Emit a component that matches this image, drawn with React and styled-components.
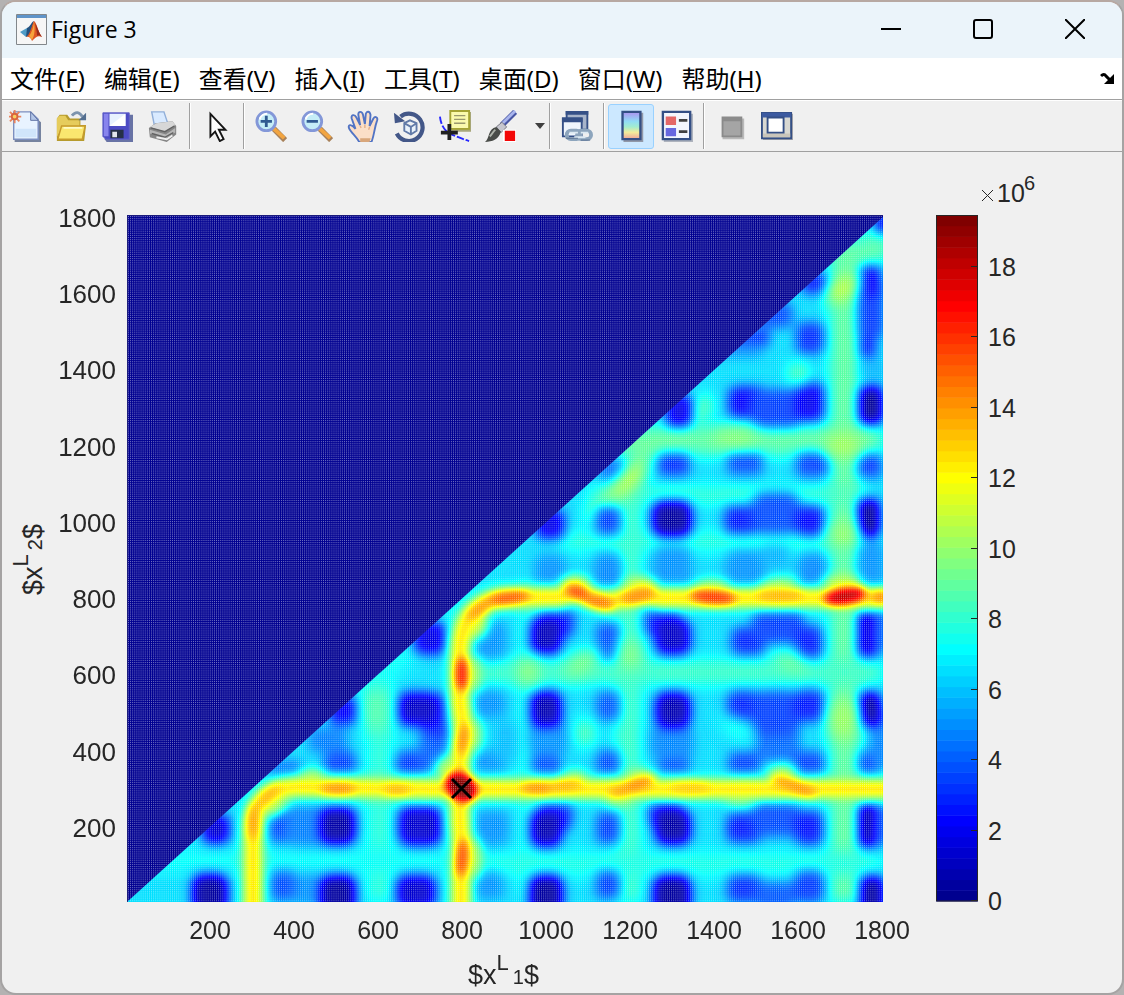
import * as React from 'react';
import styled, { createGlobalStyle } from 'styled-components';

const GlobalStyle = createGlobalStyle`
  * {
    box-sizing: border-box;
  }

  body {
    margin: 0;
    background: #b4b2b2;
    font-family: 'Open Sans', 'Noto Sans CJK SC', sans-serif;
    color: #000;
  }

  button {
    border: 0;
    padding: 0;
    background: none;
    font: inherit;
    color: inherit;
  }
`;

const Window = styled.main`
  min-height: 100vh;
  display: flex;
  flex-direction: column;
  overflow: hidden;
  border: 2px solid #a5a3a3;
  border-top-color: #b7a8a2;
  border-radius: 16px;
  background: #f0f0f0;
`;

const TitleBar = styled.header`
  height: 56px;
  display: flex;
  align-items: center;
  padding: 0 1px 2px 14px;
  background: #ebf4fa;

  & > h1 {
    flex-grow: 1;
    margin: 0 0 0 4px;
    font-size: 23px;
    line-height: 32px;
    font-weight: 400;
  }
`;

const WindowButton = styled.button`
  width: 92px;
  height: 54px;
  display: grid;
  place-items: center;
`;

const MenuBar = styled.nav`
  height: 42px;
  display: flex;
  align-items: center;
  gap: 19px;
  padding: 0 8px;
  border-bottom: 1px solid #a0a0a0;
  background: #fff;

  & > .spacer {
    flex-grow: 1;
  }
`;

const MenuButton = styled.button`
  font-family: 'Noto Sans', 'Noto Sans CJK SC', sans-serif;
  font-size: 24px;
  line-height: 36px;
  font-weight: 400;
  white-space: nowrap;

  & > u {
    text-decoration-thickness: 1px;
    text-underline-offset: 3px;
  }
`;

const ToolBar = styled.div`
  height: 52px;
  display: flex;
  align-items: center;
  border-top: 1px solid #fff;
  border-bottom: 1px solid #a0a0a0;
`;

const ToolButton = styled.button`
  width: ${(p) => (p.$narrow ? 22 : 46)}px;
  height: 45px;
  display: flex;
  align-items: center;
  justify-content: ${(p) => (p.$narrow ? 'flex-end' : 'center')};
  border: 1px solid ${(p) => (p.$active ? '#99d1ff' : 'transparent')};
  border-radius: 3px;
  background: ${(p) => (p.$active ? '#cce8ff' : 'none')};
`;

const Separator = styled.span`
  width: 2px;
  height: 46px;
  margin: 0 3px;
  border-left: 1px solid #a0a0a0;
  background: #fff;
`;

const Plot = styled.svg`
  display: block;
  width: 100%;
  height: auto;
  font-family: 'Liberation Sans', Arial, sans-serif;
  font-size: 25px;
  fill: #262626;
`;

const Icon = ({ size = 32, children }) => (
  <svg width={size} height={size} viewBox="0 0 34 34" fill="none" aria-hidden="true">
    {children}
  </svg>
);

const Lens = ({ plus }) => (
  <Icon>
    <path d="M20 20L32 32" stroke="#a8815a" strokeWidth="6" />
    <path d="M19 19L31 30" stroke="#f2a541" strokeWidth="4" />
    <circle cx="12" cy="12" r="10" fill="#c5edf7" stroke="#8397d8" strokeWidth="3" />
    <path d="M5 10a8 8 0 0 1 8-6" stroke="#fff" strokeWidth="2" />
    <path d={plus ? 'M6 12H18M12 6V18' : 'M6 12H18'} stroke="#305a91" strokeWidth="3" />
  </Icon>
);

const fileTools = [
  [
    'New Figure',
    <Icon>
      <path d="M6 5h19l9 8v21H6z" fill="#76839f" />
      <path d="M5 2h18l8 8v21H5z" fill="#e8f3ff" stroke="#7c8fc0" strokeWidth="1.5" />
      <path d="M7 20h22v9H7z" fill="#d0e5fb" />
      <path d="M23 2v9h8z" fill="#b3c6e8" stroke="#5e70a2" />
      <path d="M6 0v14M0 7h13M1 2l10 10M11 2L1 12" stroke="#e9855e" strokeWidth="2" />
      <circle cx="6" cy="7" r="3" fill="#f9cf62" stroke="#d9653f" strokeWidth="2" />
    </Icon>,
  ],
  [
    'Open File',
    <Icon>
      <path d="M2 33V9l3-4h8l3 4h11v7h6l-2 17z" fill="#b69b2d" />
      <path d="M2 29V9l3-3h6l3 5h12v6H8z" fill="#e6cc5c" />
      <path d="M3 31l4-14h25l-3 14z" fill="#fae76f" stroke="#c79b2d" strokeWidth="1.5" />
      <path d="M9 19h20" stroke="#fffbc4" strokeWidth="2" />
      <path d="M18 6c4-5 8-4 11 1" stroke="#7d94ae" strokeWidth="3" />
      <path d="M33 3v8h-8z" fill="#546f90" />
    </Icon>,
  ],
  [
    'Save Figure',
    <Icon>
      <path d="M4 5h30v29H6l-2-3z" fill="#6873a5" />
      <path d="M2 3h28v28H5l-3-3z" fill="#4c4bc3" stroke="#6463cb" />
      <path d="M3 4h5v24H3z" fill="#8884ed" />
      <path d="M9 4h17v13H9z" fill="#e8f2ff" />
      <path d="M9 17L26 4v13z" fill="#fff" />
      <path d="M10 21h14v9H10z" fill="#263047" />
      <path d="M12 23h5v6h-5z" fill="#e2e5ed" />
    </Icon>,
  ],
  [
    'Print Figure',
    <Icon>
      <path d="M8 17L5 2h13l5 15z" fill="#d9eaff" stroke="#91afd9" strokeWidth="1.5" />
      <path d="M2 19l7-5 18-2 4 5v9l-10 8-18-5z" fill="#858585" />
      <path d="M3 18l7-4 17-2 3 4-11 7z" fill="#d7d7d7" />
      <path d="M3 21l17 5 10-7v5l-10 6-17-5z" fill="#b6b6b6" />
      <path d="M4 19l15 4 10-6M5 25l14 4 9-5" stroke="#626262" strokeWidth="1.5" />
      <path d="M10 29l11 2 6-4" stroke="#efefef" strokeWidth="2" />
    </Icon>,
  ],
];

const pointerTools = [
  [
    'Edit Plot',
    <Icon>
      <path
        d="M10 4v24l5-5 5 10 4-2-5-10h7z"
        fill="#fff"
        stroke="#161616"
        strokeWidth="2"
        strokeLinejoin="miter"
      />
    </Icon>,
  ],
];

const viewTools = [
  ['Zoom In', <Lens plus />],
  ['Zoom Out', <Lens />],
  [
    'Pan',
    <Icon>
      <path
        d="M13 34C10 28 4 24 2 19c-1-4 3-4 7 1L5 9c-1-4 3-5 5-1l4 8-2-11c0-4 4-4 5 0l2 10 1-11c1-3 4-3 5 1l-1 12 4-8c2-3 5-1 4 2-3 8-3 16-6 23z"
        fill="#fbdfc8"
        stroke="#5274c4"
        strokeWidth="2"
      />
      <path d="M14 17l1 2M19 16v3M24 18l-1 3" stroke="#e3ae87" strokeWidth="1.5" />
      <path d="M14 30h11l-1 4H14z" fill="#d9a77b" />
    </Icon>,
  ],
  [
    'Rotate 3D',
    <Icon>
      <path d="M8 7a14.500 14.500 0 1 1-4 18" stroke="#435788" strokeWidth="4.5" />
      <path d="M1 3l1 11 11-2z" fill="#435788" />
      <path
        d="M12 14l6-3 7 3v8l-6 4-7-4zM12 14l7 4 6-4M19 18v8"
        fill="#e9f2fb"
        stroke="#617aa8"
        strokeWidth="2"
      />
    </Icon>,
  ],
  [
    'Data Cursor',
    <Icon>
      <path d="M13 2h21v21H13z" fill="#a8a77b" />
      <path d="M12 1h20v19H12z" fill="#fafaad" stroke="#a5a433" strokeWidth="2" />
      <path d="M16 6h12M16 10h12M16 14h12" stroke="#99986d" strokeWidth="1.5" />
      <path d="M1 7c1 9 5 16 12 19 6 2 12 5 19 7" stroke="#2727ff" strokeWidth="2" strokeDasharray="8 2" />
      <path d="M11 15v17M2 24h18" stroke="#202020" strokeWidth="4" />
    </Icon>,
  ],
  [
    'Brush Data',
    <Icon>
      <path d="M32 2L18 16" stroke="#4856a3" strokeWidth="6" />
      <path d="M32 1L18 15" stroke="#a9b5ed" strokeWidth="3" />
      <path d="M18 13l5 5-6 6-5-6z" fill="#c7c7cf" stroke="#72727d" />
      <path d="M12 18l5 5c-3 9-9 10-17 11 5-4 3-14 12-16z" fill="#494c48" />
      <path d="M5 28c3-2 3-5 6-7" stroke="#adb2a9" strokeWidth="2" />
      <path d="M19 21h14v13H19z" fill="#fff" />
      <path d="M21 22h11v11H21z" fill="#f30707" />
    </Icon>,
  ],
];

const linkTools = [
  [
    'Link Plot',
    <Icon>
      <path d="M6 2h22v19H6z" fill="#a7b4ca" stroke="#355087" strokeWidth="2" />
      <path d="M5 1h24v4H5z" fill="#355087" />
      <path d="M2 9h20v19H2z" fill="#eff5fc" stroke="#355087" strokeWidth="2" />
      <path d="M1 8h22v5H1z" fill="#355087" />
      <rect x="6" y="22" width="15" height="9" rx="4.5" stroke="#8da5bd" strokeWidth="4" />
      <rect x="17" y="22" width="15" height="9" rx="4.5" stroke="#8da5bd" strokeWidth="4" />
      <path d="M9 24h9M14 29h12M21 24h8" stroke="#dce9f2" strokeWidth="2" />
      <path d="M5 30h13M21 32h10" stroke="#586f8f" />
    </Icon>,
  ],
];

const insertTools = [
  [
    'Insert Colorbar',
    <Icon>
      <defs>
        <linearGradient id="bar" x2="0" y2="1">
          <stop stopColor="#ad91ef" />
          <stop offset=".35" stopColor="#91dcf5" />
          <stop offset=".55" stopColor="#a3edcf" />
          <stop offset=".75" stopColor="#f2ec9b" />
          <stop offset="1" stopColor="#efa19a" />
        </linearGradient>
      </defs>
      <path d="M9 3h21v31H9z" fill="#9299a8" />
      <path d="M8 2h19v29H8z" fill="url(#bar)" stroke="#344f85" strokeWidth="2.5" />
    </Icon>,
    true,
  ],
  [
    'Insert Legend',
    <Icon>
      <path d="M3 4h31v30H3z" fill="#aeb3bd" />
      <path d="M2 2h29v29H2z" fill="#f3f6fd" stroke="#344f85" strokeWidth="2.5" />
      <path d="M5 7h11v9H5z" fill="#e46767" />
      <path d="M5 19h11v9H5z" fill="#6767df" />
      <path d="M19 11h9M19 23h9" stroke="#414141" strokeWidth="3" />
    </Icon>,
  ],
];

const dockTools = [
  [
    'Hide Plot Tools',
    <Icon>
      <path d="M8 9h23v22H8z" fill="#b9b9b9" />
      <path d="M8 8h20v20H8z" fill="#a5a5a5" stroke="#8a8a8a" strokeWidth="2" />
      <path d="M8 8h20v4H8z" fill="#8b8b8b" />
    </Icon>,
  ],
  [
    'Show Plot Tools',
    <Icon>
      <path d="M2 4h32v28H2z" fill="#a5a5aa" />
      <path d="M1 3h31v27H1z" fill="#d8d8d2" stroke="#344f85" strokeWidth="2" />
      <path d="M1 3h31v5H1z" fill="#3c5aa0" />
      <path d="M2 25h29v4H2z" fill="#c9c5ba" />
      <path d="M7 8h17v16H7z" fill="#fff" stroke="#344f85" strokeWidth="2" />
    </Icon>,
  ],
];

const menus = [
  ['文件', 'F'],
  ['编辑', 'E'],
  ['查看', 'V'],
  ['插入', 'I'],
  ['工具', 'T'],
  ['桌面', 'D'],
  ['窗口', 'W'],
  ['帮助', 'H'],
];

// minima of the field: x, y, rx, ry, level
const wells = [
  [210, 894, 18, 20, 0.03],
  [283, 886, 13, 15, 0.2],
  [310, 890, 16, 16, 0.27],
  [338, 895, 18, 20, 0.03],
  [416, 892, 20, 17, 0.08],
  [488, 886, 16, 14, 0.27],
  [546, 895, 17, 20, 0.03],
  [608, 885, 12, 14, 0.19],
  [672, 896, 19, 21, 0.03],
  [744, 889, 17, 14, 0.17],
  [775, 896, 20, 14, 0.21],
  [809, 887, 15, 16, 0.18],
  [872, 896, 12, 20, 0.03],
  [216, 829, 14, 15, 0.08],
  [282, 826, 15, 17, 0.2],
  [310, 826, 24, 20, 0.25],
  [338, 826, 18, 19, 0.04],
  [420, 826, 22, 20, 0.08],
  [490, 828, 19, 18, 0.27],
  [555, 816, 18, 15, 0.16],
  [546, 829, 16, 18, 0.05],
  [608, 828, 12, 16, 0.19],
  [666, 814, 17, 14, 0.15],
  [673, 827, 18, 18, 0.04],
  [744, 828, 18, 15, 0.15],
  [776, 819, 24, 18, 0.2],
  [809, 828, 14, 17, 0.14],
  [868, 825, 9, 22, 0.02],
  [881, 825, 8, 20, 0.2],
  [340, 763, 16, 12, 0.19],
  [285, 769, 17, 9, 0.24],
  [412, 763, 16, 12, 0.18],
  [435, 745, 16, 26, 0.22],
  [488, 763, 17, 12, 0.27],
  [505, 742, 10, 20, 0.31],
  [546, 764, 15, 11, 0.2],
  [608, 763, 12, 13, 0.2],
  [674, 763, 16, 11, 0.2],
  [744, 763, 16, 11, 0.19],
  [778, 740, 22, 22, 0.23],
  [809, 763, 15, 12, 0.19],
  [869, 763, 10, 12, 0.18],
  [880, 738, 10, 30, 0.25],
  [328, 740, 20, 13, 0.25],
  [343, 710, 15, 15, 0.12],
  [437, 715, 12, 22, 0.16],
  [418, 709, 20, 17, 0.07],
  [488, 704, 18, 14, 0.27],
  [548, 738, 20, 18, 0.27],
  [546, 709, 16, 18, 0.05],
  [608, 706, 12, 15, 0.21],
  [672, 742, 22, 18, 0.26],
  [673, 710, 18, 18, 0.05],
  [744, 706, 17, 15, 0.16],
  [776, 713, 24, 22, 0.19],
  [809, 706, 15, 16, 0.15],
  [870, 709, 11, 17, 0.03],
  [430, 638, 17, 17, 0.1],
  [488, 640, 19, 19, 0.27],
  [556, 623, 19, 15, 0.16],
  [546, 636, 16, 18, 0.06],
  [608, 641, 12, 18, 0.2],
  [663, 622, 18, 15, 0.16],
  [673, 637, 18, 18, 0.07],
  [748, 641, 17, 14, 0.16],
  [778, 626, 26, 18, 0.19],
  [809, 642, 13, 16, 0.15],
  [868, 633, 10, 24, 0.07],
  [881, 630, 8, 22, 0.22],
  [550, 572, 16, 18, 0.27],
  [608, 572, 14, 19, 0.26],
  [672, 568, 20, 22, 0.27],
  [745, 572, 20, 22, 0.27],
  [775, 557, 15, 12, 0.3],
  [812, 574, 14, 21, 0.26],
  [871, 565, 14, 25, 0.27],
  [550, 524, 15, 15, 0.1],
  [608, 521, 13, 14, 0.19],
  [672, 519, 20, 18, 0.03],
  [742, 520, 18, 14, 0.15],
  [776, 513, 24, 21, 0.2],
  [810, 521, 14, 15, 0.13],
  [869, 518, 11, 19, 0.02],
  [612, 470, 13, 11, 0.22],
  [674, 465, 16, 11, 0.17],
  [745, 464, 18, 11, 0.2],
  [812, 465, 16, 12, 0.19],
  [870, 466, 12, 12, 0.18],
  [679, 411, 14, 17, 0.1],
  [747, 402, 19, 16, 0.12],
  [776, 408, 26, 19, 0.19],
  [810, 402, 14, 19, 0.11],
  [871, 405, 12, 19, 0.02],
  [752, 338, 18, 9, 0.17],
  [775, 315, 18, 13, 0.2],
  [740, 350, 22, 7, 0.26],
  [810, 338, 14, 16, 0.17],
  [868, 340, 8, 18, 0.14],
  [871, 310, 13, 28, 0.18],
  [871, 280, 11, 15, 0.12],
  [814, 283, 13, 11, 0.15],
  [882, 223, 6, 9, 0.05],
  [872, 370, 12, 10, 0.3],
];

// broad plateaus: path, width, level
const plateaus = [
  ['M845 902V240', 30, 0.47],
  ['M628 902V470', 24, 0.44],
  ['M528 902V580', 14, 0.4],
  ['M380 902V650', 28, 0.41],
  ['M128 860H460', 24, 0.38],
  ['M480 864H882', 24, 0.4],
  ['M480 672H882', 26, 0.43],
  ['M560 541H882', 18, 0.42],
  ['M600 441H882', 28, 0.47],
  ['M590 495H850', 16, 0.43],
  ['M590 520L650 450L710 400', 18, 0.48],
  ['M330 720L460 610', 20, 0.38],
  ['M860 270L883 235', 30, 0.46],
];

const lumps = [
  [628, 480, 22, 8, 0.58, -42],
  [843, 445, 18, 12, 0.54, 0],
  [842, 289, 18, 9, 0.58, -38],
  [735, 437, 24, 8, 0.52, 0],
  [630, 655, 12, 16, 0.5, 0],
  [582, 663, 20, 10, 0.5, -35],
  [528, 672, 10, 14, 0.52, 0],
  [790, 662, 18, 7, 0.5, 20],
  [843, 720, 14, 22, 0.53, 0],
  [843, 535, 14, 14, 0.53, 0],
  [585, 733, 9, 14, 0.48, 0],
  [735, 728, 18, 6, 0.42, 35],
  [798, 373, 9, 10, 0.5, 0],
  [376, 710, 12, 25, 0.46, 0],
];

const ridges = [
  'M253 920V830Q254 787 300 787L360 788L430 789H900',
  'M461 920V880L463 858L460 820V760L464 735L460 700V655Q460 606 500 598L560 597L574 592L606 602L642 594L660 598H900',
];

const peaks = [
  [461, 787, 17, 13, 1, 40],
  [462, 674, 6, 17, 0.88, 0],
  [463, 739, 5, 16, 0.75, 8],
  [462, 858, 6, 19, 0.81, 5],
  [508, 598, 22, 6, 0.8, -8],
  [480, 609, 16, 5, 0.74, -38],
  [577, 592, 12, 6, 0.82, 15],
  [599, 602, 16, 6, 0.77, 12],
  [638, 596, 18, 7, 0.74, -14],
  [713, 597, 23, 7, 0.83, 5],
  [780, 595, 24, 6, 0.7, 0],
  [845, 596, 21, 8, 0.95, -9],
  [880, 597, 9, 5, 0.76, 0],
  [338, 789, 18, 5, 0.75, 0],
  [538, 788, 17, 5, 0.75, 0],
  [566, 785, 18, 5, 0.71, -8],
  [638, 784, 18, 6, 0.75, -18],
  [620, 791, 12, 5, 0.72, -10],
  [690, 788, 20, 5, 0.68, 0],
  [787, 783, 17, 6, 0.73, 16],
  [804, 790, 13, 5, 0.74, 14],
  [397, 790, 14, 5, 0.7, 0],
  [253, 822, 5, 18, 0.73, 0],
  [268, 796, 16, 5, 0.7, -42],
];

// shoulders beside the ridges
const shoulders = [
  [575, 585, 14, 8, 0.62, 0],
  [640, 585, 16, 7, 0.6, 0],
  [778, 586, 20, 7, 0.56, -8],
  [712, 587, 18, 7, 0.55, 0],
  [842, 584, 20, 8, 0.58, 0],
  [475, 625, 12, 14, 0.58, 35],
  [474, 674, 7, 18, 0.57, 0],
  [474, 735, 7, 16, 0.55, 0],
  [474, 858, 7, 20, 0.57, 0],
  [640, 777, 14, 7, 0.57, 0],
  [782, 774, 14, 8, 0.57, 0],
  [575, 778, 12, 7, 0.54, 0],
  [618, 798, 14, 6, 0.56, 0],
  [740, 798, 16, 6, 0.53, 0],
  [312, 777, 12, 7, 0.56, 0],
  [275, 805, 14, 8, 0.57, -40],
  [446, 768, 10, 12, 0.56, 30],
];

const gray = (v) => {
  const c = Math.round(v * 255);
  return `rgb(${c},${c},${c})`;
};

const clamp = (v) => Math.max(0, Math.min(1, v));

const jet = (i) => {
  const v = (i + 1) / 64;
  const rgb = [3, 2, 1].map((k) => Math.round(255 * clamp(1.5 - Math.abs(4 * v - k))));
  return `rgb(${rgb.join(',')})`;
};

const Blobs = ({ data }) =>
  data.map(([x, y, rx, ry, v, angle = 0], i) => (
    <ellipse key={i} cx={x} cy={y} rx={rx} ry={ry} fill={gray(v)} transform={`rotate(${angle} ${x} ${y})`} />
  ));

const Wells = () =>
  wells.map(([x, y, rx, ry, v], i) => (
    <rect key={i} x={x - rx} y={y - ry} width={rx * 2} height={ry * 2} rx={Math.min(rx, ry) * 0.6} fill={gray(v)} />
  ));

const Blur = ({ id, amount }) => (
  <filter
    id={id}
    filterUnits="userSpaceOnUse"
    x="80"
    y="170"
    width="860"
    height="790"
    colorInterpolationFilters="sRGB"
  >
    <feGaussianBlur stdDeviation={amount} />
  </filter>
);

const mesh = Array.from({ length: 360 }, (_, i) => `M128 ${(216.5 + i * 1.906).toFixed(2)}H882.5`).join('');

function Heatmap() {
  return (
    <g>
      <defs>
        <Blur id="wide" amount="8" />
        <Blur id="mid" amount="6" />
        <Blur id="tight" amount="4" />
        <filter
          id="jet"
          filterUnits="userSpaceOnUse"
          x="127"
          y="215"
          width="756"
          height="687"
          colorInterpolationFilters="sRGB"
        >
          <feComponentTransfer>
            <feFuncR type="table" tableValues="0 0 0 0 .5 1 1 1 .5" />
            <feFuncG type="table" tableValues="0 0 .5 1 1 1 .5 0 0" />
            <feFuncB type="table" tableValues=".5 1 1 1 .5 0 0 0 0" />
          </feComponentTransfer>
        </filter>
        <clipPath id="lower">
          <path d="M127 902L883 217V902z" />
        </clipPath>
      </defs>
      <path d="M127 215H883V902H127z" fill="#000091" />
      <g clipPath="url(#lower)">
        <g filter="url(#jet)">
          <path d="M80 170H940V960H80z" fill={gray(0.345)} />
          <g filter="url(#wide)" fill="none">
            {plateaus.map(([d, width, v]) => (
              <path key={d} d={d} stroke={gray(v)} strokeWidth={width} />
            ))}
          </g>
          <g filter="url(#mid)">
            <Wells />
          </g>
          <g filter="url(#wide)">
            <Blobs data={lumps} />
          </g>
          <g filter="url(#mid)" fill="none" stroke={gray(0.52)} strokeWidth="23">
            {ridges.map((d) => (
              <path key={d} d={d} />
            ))}
          </g>
          <g filter="url(#mid)">
            <Blobs data={shoulders} />
          </g>
          <g filter="url(#tight)" fill="none" stroke={gray(0.66)} strokeWidth="13">
            {ridges.map((d) => (
              <path key={d} d={d} />
            ))}
          </g>
          <g filter="url(#tight)">
            <Blobs data={peaks} />
          </g>
        </g>
      </g>
      <path d={mesh} fill="none" stroke="#fff" strokeOpacity=".5" strokeWidth=".95" strokeDasharray=".95 1.147" />
      <path d="M127.500 902V215.500H883" fill="none" stroke="#262673" strokeOpacity=".7" />
      <path d="M452 779l19 19M471 779l-19 19" stroke="#000" strokeWidth="3" />
    </g>
  );
}

function Colorbar() {
  const step = 686 / 64;

  return (
    <g>
      {Array.from({ length: 64 }, (_, i) => (
        <rect key={i} x="936" y={901 - (i + 1) * step} width="42" height={step + 0.5} fill={jet(i)} />
      ))}
      <path d="M936.500 215.500H977.500V901H936.500z" fill="none" stroke="#262626" />
      {[0, 2, 4, 6, 8, 10, 12, 14, 16, 18].map((n) => (
        <g key={n}>
          <path d={`M971 ${Math.round(901 - n * 35.25) - 0.5}h7`} stroke="#262626" />
          <text x="988" y={Math.round(910 - n * 35.25)}>
            {n}
          </text>
        </g>
      ))}
      <path d="M982 190l11 11M993 190l-11 11" stroke="#262626" />
      <text x="997" y="202">
        10
      </text>
      <text x="1024" y="190" fontSize="20">
        6
      </text>
    </g>
  );
}

const AxisLabel = ({ index, ...props }) => (
  <text fontSize="27" {...props}>
    $x
    <tspan dy="-14" fontSize="22">
      L
    </tspan>
    <tspan dy="14" dx="4" fontSize="20">
      {index}
    </tspan>
    $
  </text>
);

function Chart() {
  const ticks = [200, 400, 600, 800, 1000, 1200, 1400, 1600, 1800];

  return (
    <Plot viewBox="2 152 1120 841" role="img" aria-label="Figure 3">
      <Heatmap />
      {ticks.map((n, i) => (
        <g key={n}>
          <text x={210 + i * 84} y="939" textAnchor="middle">
            {n}
          </text>
          <text x="116" y={Math.round(837 - i * 76.3)} textAnchor="end" fontSize="26">
            {n}
          </text>
        </g>
      ))}
      <AxisLabel index="1" x="468" y="984" />
      <AxisLabel index="2" transform="translate(42 595) rotate(-90)" />
      <Colorbar />
    </Plot>
  );
}

const Tools = ({ items }) =>
  items.map(([label, icon, active]) => (
    <ToolButton key={label} aria-label={label} $active={active}>
      {icon}
    </ToolButton>
  ));

export default function App() {
  return (
    <>
      <GlobalStyle />
      <Window>
        <TitleBar>
          <svg width="31" height="31" viewBox="0 0 31 31" aria-hidden="true">
            <path d="M.5.5h30v30H.5z" fill="#f6f6f6" stroke="#82878b" />
            <path d="M1 1h29v3H1z" fill="#5f94c9" />
            <path d="M4 18l7-4 4 4-5 5z" fill="#4f9cc8" />
            <path d="M11 14c4-2 4-6 7-7l-4 14-4 2z" fill="#24517e" />
            <path d="M18 7c3 2 4 11 8 16-4-2-6 0-10 4-1-3-3-5-6-4 4-2 5-10 8-16z" fill="#de5623" />
            <path d="M18 8c-1 6-2 10-5 14l3 4c3-5 3-11 2-18z" fill="#f5a33c" />
            <path d="M19 9c2 3 4 10 7 14-3-2-4-2-5-1 0-4-1-8-2-13z" fill="#982d1e" />
          </svg>
          <h1>Figure 3</h1>
          <WindowButton aria-label="Minimize">
            <svg width="20" height="20" stroke="#000" strokeWidth="2">
              <path d="M0 10h20" />
            </svg>
          </WindowButton>
          <WindowButton aria-label="Maximize">
            <svg width="20" height="20" fill="none" stroke="#000" strokeWidth="2">
              <rect x="1" y="1" width="18" height="18" rx="2" />
            </svg>
          </WindowButton>
          <WindowButton aria-label="Close">
            <svg width="20" height="20" stroke="#000" strokeWidth="2">
              <path d="M0 0l20 20M20 0L0 20" />
            </svg>
          </WindowButton>
        </TitleBar>
        <MenuBar>
          {menus.map(([label, key]) => (
            <MenuButton key={key}>
              {label}(<u>{key}</u>)
            </MenuButton>
          ))}
          <div className="spacer" />
          <button aria-label="Dock Figure">
            <svg width="14" height="12" viewBox="0 0 14 12" fill="none">
              <path d="M1 3q3-3 5 0l5 5" stroke="#000" strokeWidth="3" />
              <path d="M14 1v10H4z" fill="#000" />
            </svg>
          </button>
        </MenuBar>
        <ToolBar>
          <Tools items={fileTools} />
          <Separator />
          <Tools items={pointerTools} />
          <Separator />
          <Tools items={viewTools} />
          <ToolButton $narrow aria-label="Brush Colors">
            <svg width="10" height="6" viewBox="0 0 10 6" aria-hidden="true">
              <path d="M0 0h10L5 6z" fill="#404040" />
            </svg>
          </ToolButton>
          <Separator />
          <Tools items={linkTools} />
          <Separator />
          <Tools items={insertTools} />
          <Separator />
          <Tools items={dockTools} />
        </ToolBar>
        <Chart />
      </Window>
    </>
  );
}
